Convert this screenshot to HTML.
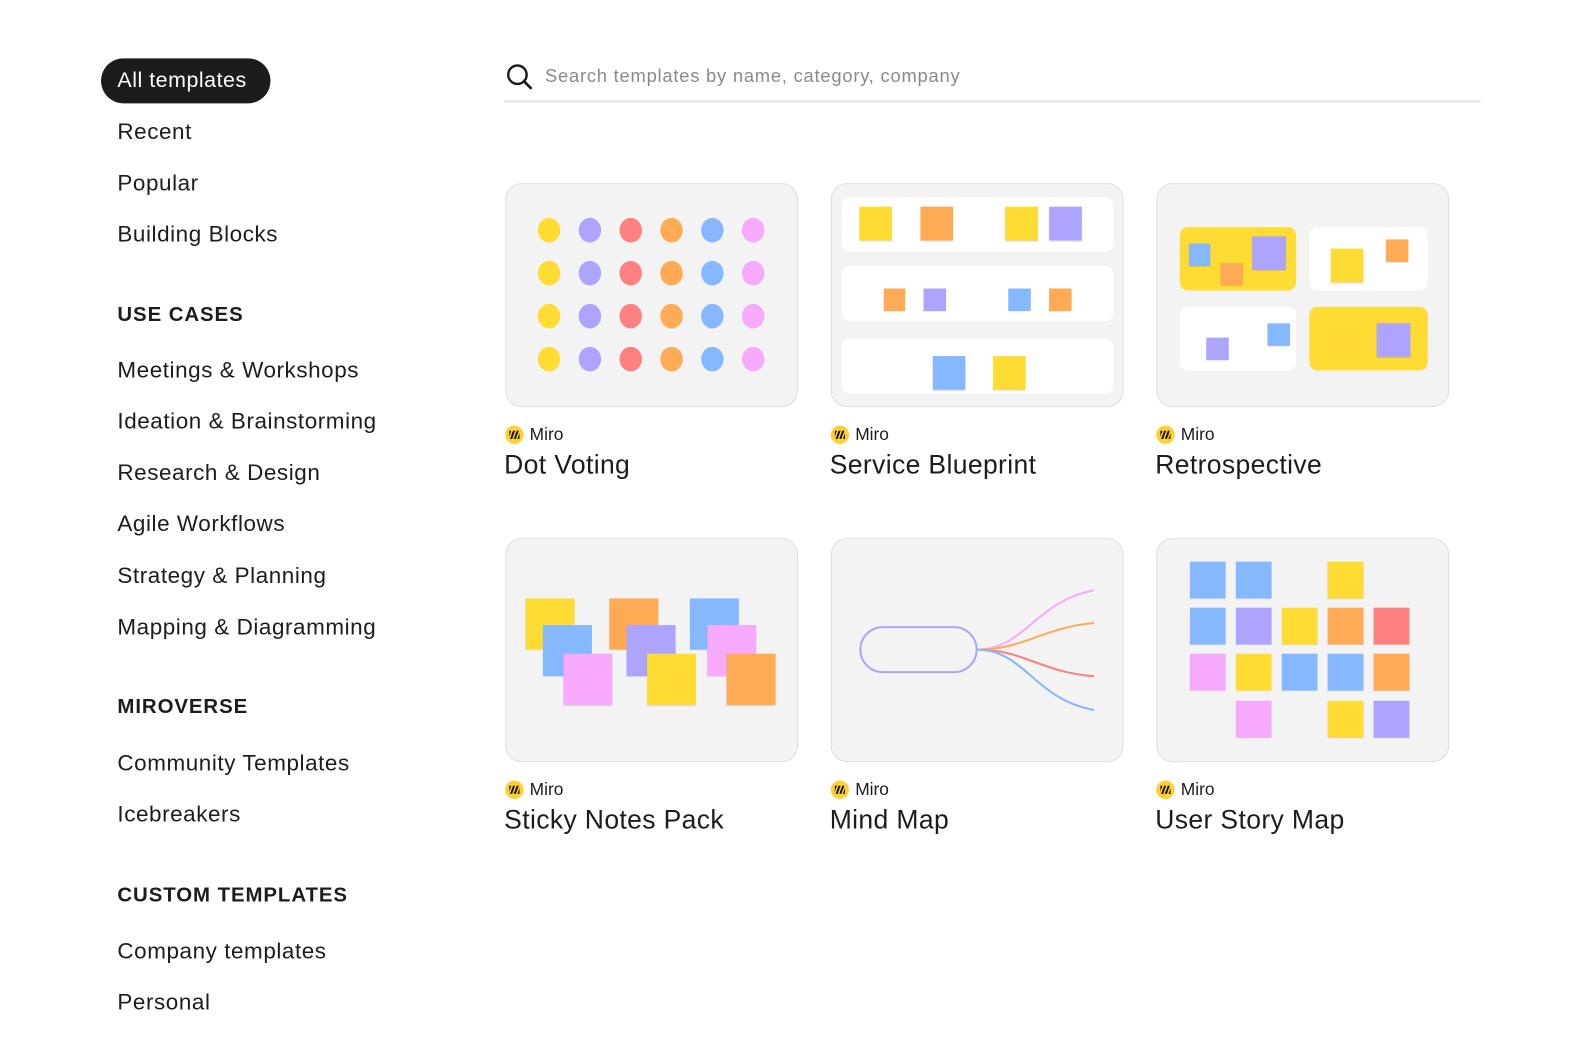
<!DOCTYPE html>
<html><head><meta charset="utf-8"><style>
*{margin:0;padding:0;box-sizing:border-box}
html,body{width:1596px;height:1064px;overflow:hidden;background:#fff}
#w{position:absolute;left:-2px;top:-1px;width:1561px;height:1040px;transform:scale(1.0205,1.023);transform-origin:0 0;font-family:"Liberation Sans",sans-serif;color:#1c1c1e}
.a{position:absolute}
.pill{left:101px;top:58px;width:166px;height:44px;border-radius:22px;background:#1c1c1e;color:#fff;font-size:21px;line-height:44px;padding-left:16px;letter-spacing:.5px}
.it{position:absolute;left:117px;font-size:22px;line-height:26px;transform:translateY(-13px);white-space:nowrap;letter-spacing:.55px}
.h{position:absolute;left:117px;font-size:20px;font-weight:bold;letter-spacing:.9px;transform:translateY(-12px)}
.card{position:absolute;width:287px;height:219px;border:1.5px solid #dedede;border-radius:16px;background:#f3f3f3;overflow:hidden}
.d{position:absolute;width:22px;height:24px;border-radius:50%}
.n{position:absolute;box-shadow:0 1px 1px rgba(0,0,0,.15)}
.wb{position:absolute;background:#fff;border-radius:8px}
.yb{position:absolute;background:#ffdc33;border-radius:8px}
.y{background:#ffdc33}.p{background:#aca4ff}.r{background:#ff8080}.o{background:#ffaa55}.b{background:#85b8ff}.k{background:#f7aafc}
.miro{position:absolute;font-size:17px;line-height:20px;padding-left:24px}
.miro i{position:absolute;left:0;top:1px;width:18px;height:18px;border-radius:50%;background:#ffd02f}
.miro i:after{content:"";position:absolute;left:4px;top:5px;width:10px;height:8px;background:repeating-linear-gradient(110deg,#1c1c1e 0 2px,transparent 2px 3.4px)}
.t{position:absolute;font-size:26px;line-height:30px;white-space:nowrap;letter-spacing:.35px}
</style></head><body><div id="w">
<div class="a pill">All templates</div>
<div class="it" style="top:130px">Recent</div>
<div class="it" style="top:180px">Popular</div>
<div class="it" style="top:230px">Building Blocks</div>
<div class="h" style="top:310px">USE CASES</div>
<div class="it" style="top:363px">Meetings &amp; Workshops</div>
<div class="it" style="top:413px">Ideation &amp; Brainstorming</div>
<div class="it" style="top:463px">Research &amp; Design</div>
<div class="it" style="top:513px">Agile Workflows</div>
<div class="it" style="top:564px">Strategy &amp; Planning</div>
<div class="it" style="top:614px">Mapping &amp; Diagramming</div>
<div class="h" style="top:693px">MIROVERSE</div>
<div class="it" style="top:747px">Community Templates</div>
<div class="it" style="top:797px">Icebreakers</div>
<div class="h" style="top:877px">CUSTOM TEMPLATES</div>
<div class="it" style="top:931px">Company templates</div>
<div class="it" style="top:981px">Personal</div>

<svg class="a" style="left:497px;top:62px" width="28" height="28" viewBox="0 0 28 28"><circle cx="12" cy="12" r="9" fill="none" stroke="#1c1c1e" stroke-width="2.4"/><path d="M18.5 18.5 L25 25" stroke="#1c1c1e" stroke-width="2.6" stroke-linecap="round"/></svg>
<div class="a" style="left:536px;top:65px;font-size:18px;color:#8a8a8a;letter-spacing:.75px">Search templates by name, category, company</div>
<div class="a" style="left:496px;top:99px;width:957px;height:2px;background:#e4e4e4"></div>

<div class="card" style="left:497px;top:180px"></div>

<div class="card" style="left:816px;top:180px"></div>
<div class="wb" style="left:827px;top:194px;width:266px;height:53px"></div>
<div class="wb" style="left:827px;top:261px;width:266px;height:54px"></div>
<div class="wb" style="left:827px;top:332px;width:266px;height:54px"></div>
<div class="n y" style="left:844px;top:203px;width:32px;height:33px"></div>
<div class="n o" style="left:904px;top:203px;width:32px;height:33px"></div>
<div class="n y" style="left:987px;top:203px;width:32px;height:33px"></div>
<div class="n p" style="left:1030px;top:203px;width:32px;height:33px"></div>
<div class="n o" style="left:868px;top:283px;width:21px;height:22px"></div>
<div class="n p" style="left:907px;top:283px;width:22px;height:22px"></div>
<div class="n b" style="left:990px;top:283px;width:22px;height:22px"></div>
<div class="n o" style="left:1030px;top:283px;width:22px;height:22px"></div>
<div class="n b" style="left:916px;top:349px;width:32px;height:33px"></div>
<div class="n y" style="left:975px;top:349px;width:32px;height:33px"></div>

<div class="card" style="left:1135px;top:180px"></div>
<div class="yb" style="left:1158px;top:223px;width:114px;height:62px"></div>
<div class="wb" style="left:1285px;top:223px;width:116px;height:62px"></div>
<div class="wb" style="left:1158px;top:301px;width:114px;height:62px"></div>
<div class="yb" style="left:1285px;top:301px;width:116px;height:62px"></div>
<div class="n b" style="left:1167px;top:239px;width:21px;height:22px"></div>
<div class="n o" style="left:1198px;top:258px;width:22px;height:22px"></div>
<div class="n p" style="left:1229px;top:232px;width:33px;height:33px"></div>
<div class="n y" style="left:1306px;top:244px;width:32px;height:33px"></div>
<div class="n o" style="left:1360px;top:235px;width:22px;height:22px"></div>
<div class="n p" style="left:1184px;top:331px;width:22px;height:22px"></div>
<div class="n b" style="left:1244px;top:317px;width:22px;height:22px"></div>
<div class="n p" style="left:1351px;top:317px;width:33px;height:33px"></div>

<div class="card" style="left:497px;top:527px"></div>
<div class="n y" style="left:517px;top:586px;width:48px;height:50px"></div>
<div class="n o" style="left:599px;top:586px;width:48px;height:50px"></div>
<div class="n b" style="left:678px;top:586px;width:48px;height:50px"></div>
<div class="n b" style="left:534px;top:612px;width:48px;height:50px"></div>
<div class="n p" style="left:616px;top:612px;width:48px;height:50px"></div>
<div class="n k" style="left:695px;top:612px;width:48px;height:50px"></div>
<div class="n k" style="left:554px;top:640px;width:48px;height:50px"></div>
<div class="n y" style="left:636px;top:640px;width:48px;height:50px"></div>
<div class="n o" style="left:714px;top:640px;width:48px;height:50px"></div>

<div class="card" style="left:816px;top:527px"></div>
<svg class="a" style="left:816px;top:527px" width="287" height="219">
<rect x="29" y="87" width="114" height="44" rx="22" fill="none" stroke="#aca4ff" stroke-width="2"/>
<path d="M143 109 C190 109 200 62 258 51" fill="none" stroke="#f7aafc" stroke-width="2"/>
<path d="M143 109 C190 109 205 88 258 83" fill="none" stroke="#ffaa55" stroke-width="2"/>
<path d="M143 109 C190 109 205 131 258 135" fill="none" stroke="#ff8080" stroke-width="2"/>
<path d="M143 109 C190 109 200 158 258 168" fill="none" stroke="#85b8ff" stroke-width="2"/>
</svg>

<div class="card" style="left:1135px;top:527px"></div>

<div class="miro" style="left:497px;top:416px"><i></i>Miro</div>
<div class="t" style="left:496px;top:440px">Dot Voting</div>
<div class="miro" style="left:816px;top:416px"><i></i>Miro</div>
<div class="t" style="left:815px;top:440px">Service Blueprint</div>
<div class="miro" style="left:1135px;top:416px"><i></i>Miro</div>
<div class="t" style="left:1134px;top:440px">Retrospective</div>
<div class="miro" style="left:497px;top:763px"><i></i>Miro</div>
<div class="t" style="left:496px;top:787px">Sticky Notes Pack</div>
<div class="miro" style="left:816px;top:763px"><i></i>Miro</div>
<div class="t" style="left:815px;top:787px">Mind Map</div>
<div class="miro" style="left:1135px;top:763px"><i></i>Miro</div>
<div class="t" style="left:1134px;top:787px">User Story Map</div>

<div class="d y" style="left:529px;top:214px"></div><div class="d p" style="left:569px;top:214px"></div><div class="d r" style="left:609px;top:214px"></div><div class="d o" style="left:649px;top:214px"></div><div class="d b" style="left:689px;top:214px"></div><div class="d k" style="left:729px;top:214px"></div>
<div class="d y" style="left:529px;top:256px"></div><div class="d p" style="left:569px;top:256px"></div><div class="d r" style="left:609px;top:256px"></div><div class="d o" style="left:649px;top:256px"></div><div class="d b" style="left:689px;top:256px"></div><div class="d k" style="left:729px;top:256px"></div>
<div class="d y" style="left:529px;top:298px"></div><div class="d p" style="left:569px;top:298px"></div><div class="d r" style="left:609px;top:298px"></div><div class="d o" style="left:649px;top:298px"></div><div class="d b" style="left:689px;top:298px"></div><div class="d k" style="left:729px;top:298px"></div>
<div class="d y" style="left:529px;top:340px"></div><div class="d p" style="left:569px;top:340px"></div><div class="d r" style="left:609px;top:340px"></div><div class="d o" style="left:649px;top:340px"></div><div class="d b" style="left:689px;top:340px"></div><div class="d k" style="left:729px;top:340px"></div>

<div class="n b" style="left:1168px;top:550px;width:35px;height:36px"></div>
<div class="n b" style="left:1213px;top:550px;width:35px;height:36px"></div>
<div class="n y" style="left:1303px;top:550px;width:35px;height:36px"></div>
<div class="n b" style="left:1168px;top:595px;width:35px;height:36px"></div>
<div class="n p" style="left:1213px;top:595px;width:35px;height:36px"></div>
<div class="n y" style="left:1258px;top:595px;width:35px;height:36px"></div>
<div class="n o" style="left:1303px;top:595px;width:35px;height:36px"></div>
<div class="n r" style="left:1348px;top:595px;width:35px;height:36px"></div>
<div class="n k" style="left:1168px;top:640px;width:35px;height:36px"></div>
<div class="n y" style="left:1213px;top:640px;width:35px;height:36px"></div>
<div class="n b" style="left:1258px;top:640px;width:35px;height:36px"></div>
<div class="n b" style="left:1303px;top:640px;width:35px;height:36px"></div>
<div class="n o" style="left:1348px;top:640px;width:35px;height:36px"></div>
<div class="n k" style="left:1213px;top:686px;width:35px;height:36px"></div>
<div class="n y" style="left:1303px;top:686px;width:35px;height:36px"></div>
<div class="n p" style="left:1348px;top:686px;width:35px;height:36px"></div>
</div></body></html>
